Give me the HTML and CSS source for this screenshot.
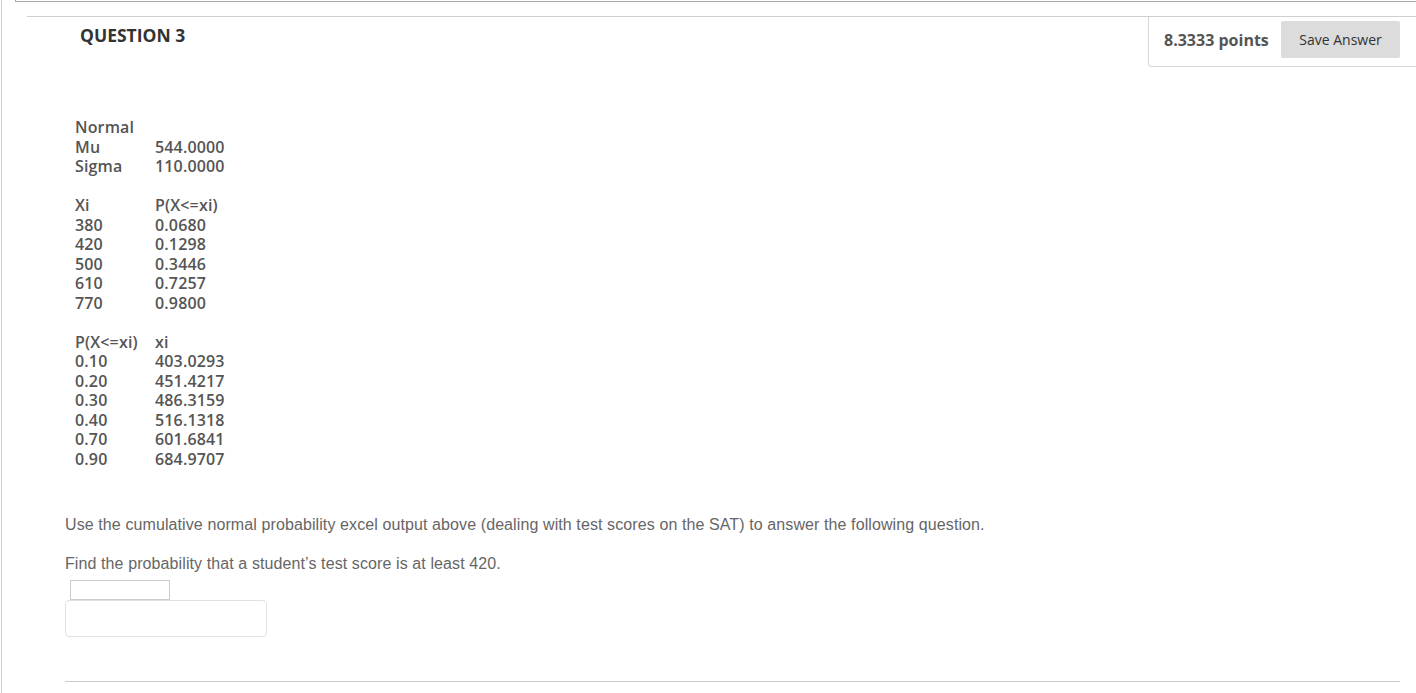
FILE: index.html
```html
<!DOCTYPE html>
<html>
<head>
<meta charset="utf-8">
<link rel="stylesheet" href="styles.css">
</head>
<body>
<div class="frame">
  <div class="topcorner"></div>
  <div class="question">
    <div class="q-header">
      <h3 class="q-title">QUESTION 3</h3>
      <div class="points-box">
        <span class="points">8.3333 points</span>
        <button class="save-btn">Save Answer</button>
      </div>
    </div>
    <div class="q-body">
      <div class="excel">
        <div>Normal</div><div></div>
        <div>Mu</div><div>544.0000</div>
        <div>Sigma</div><div>110.0000</div>
        <div class="blank"></div><div class="blank"></div>
        <div>Xi</div><div>P(X&lt;=xi)</div>
        <div>380</div><div>0.0680</div>
        <div>420</div><div>0.1298</div>
        <div>500</div><div>0.3446</div>
        <div>610</div><div>0.7257</div>
        <div>770</div><div>0.9800</div>
        <div class="blank"></div><div class="blank"></div>
        <div>P(X&lt;=xi)</div><div>xi</div>
        <div>0.10</div><div>403.0293</div>
        <div>0.20</div><div>451.4217</div>
        <div>0.30</div><div>486.3159</div>
        <div>0.40</div><div>516.1318</div>
        <div>0.70</div><div>601.6841</div>
        <div>0.90</div><div>684.9707</div>
      </div>
      <p class="para first">Use the cumulative normal probability excel output above (dealing with test scores on the SAT) to answer the following question.</p>
      <p class="para">Find the probability that a student’s test score is at least 420.</p>
      <div class="answer-input"></div>
      <div class="answer-box"></div>
      <div class="rule"></div>
    </div>
  </div>
</div>
</body>
</html>
```

FILE: styles.css
```css
html, body {
  margin: 0;
  padding: 0;
  background: #fff;
}
.frame {
  margin-left: 1px;
  border-left: 1px solid #cfcfcf;
  min-height: 693px;
  box-sizing: border-box;
  overflow: hidden;
}
.topcorner {
  margin-left: 13px;
  height: 1px;
  border-left: 1px solid #a9a9a9;
  border-bottom: 1px solid #a9a9a9;
}
.question {
  margin-left: 25px;
  margin-top: 14px;
}
.q-header {
  display: flex;
  justify-content: space-between;
  align-items: flex-start;
  border-top: 1px solid #cfcfcf;
}
.q-title {
  margin: 0;
  padding: 6px 0 0 53px;
  font-family: "Open Sans", sans-serif;
  font-weight: 700;
  font-size: 17.5px;
  line-height: 24px;
  color: #333;
}
.points-box {
  display: flex;
  align-items: center;
  gap: 12px;
  padding: 4px 16px 8px 15px;
  border-left: 1px solid #d6d6d6;
  border-bottom: 1px solid #d6d6d6;
  border-bottom-left-radius: 4px;
  width: 268px;
  box-sizing: border-box;
}
.points {
  font-family: "Open Sans", sans-serif;
  font-weight: 700;
  font-size: 16px;
  color: #555;
  white-space: nowrap;
}
.save-btn {
  margin-left: auto;
  width: 119px;
  height: 37px;
  border: none;
  border-radius: 2px;
  background: #dcdcdc;
  font-family: "Open Sans", sans-serif;
  font-size: 14px;
  color: #333;
  padding: 0;
}
.q-body {
  margin-left: 38px;
  margin-right: 16px;
  padding-top: 51px;
}
.excel {
  display: grid;
  grid-template-columns: 80px auto;
  justify-content: start;
  padding-left: 10px;
  font-family: "Open Sans", sans-serif;
  font-weight: 600;
  font-size: 16px;
  line-height: 19.5px;
  letter-spacing: 0.15px;
  color: #555;
}
.excel .blank {
  height: 19.5px;
}
.para {
  margin: 0;
  font-family: "Liberation Sans", Arial, sans-serif;
  font-size: 16px;
  line-height: 18px;
  letter-spacing: 0.1px;
  color: #666;
  margin-top: 21px;
}
.para.first {
  margin-top: 47px;
}
.answer-input {
  margin-top: 7px;
  margin-left: 5px;
  width: 100px;
  height: 20px;
  border: 1px solid #ccc;
  box-sizing: border-box;
}
.answer-box {
  width: 202px;
  height: 37px;
  border: 1px solid #e2e2e2;
  border-radius: 4px;
  box-sizing: border-box;
}
.rule {
  margin-top: 44px;
  border-top: 1px solid #cccccc;
}
```
